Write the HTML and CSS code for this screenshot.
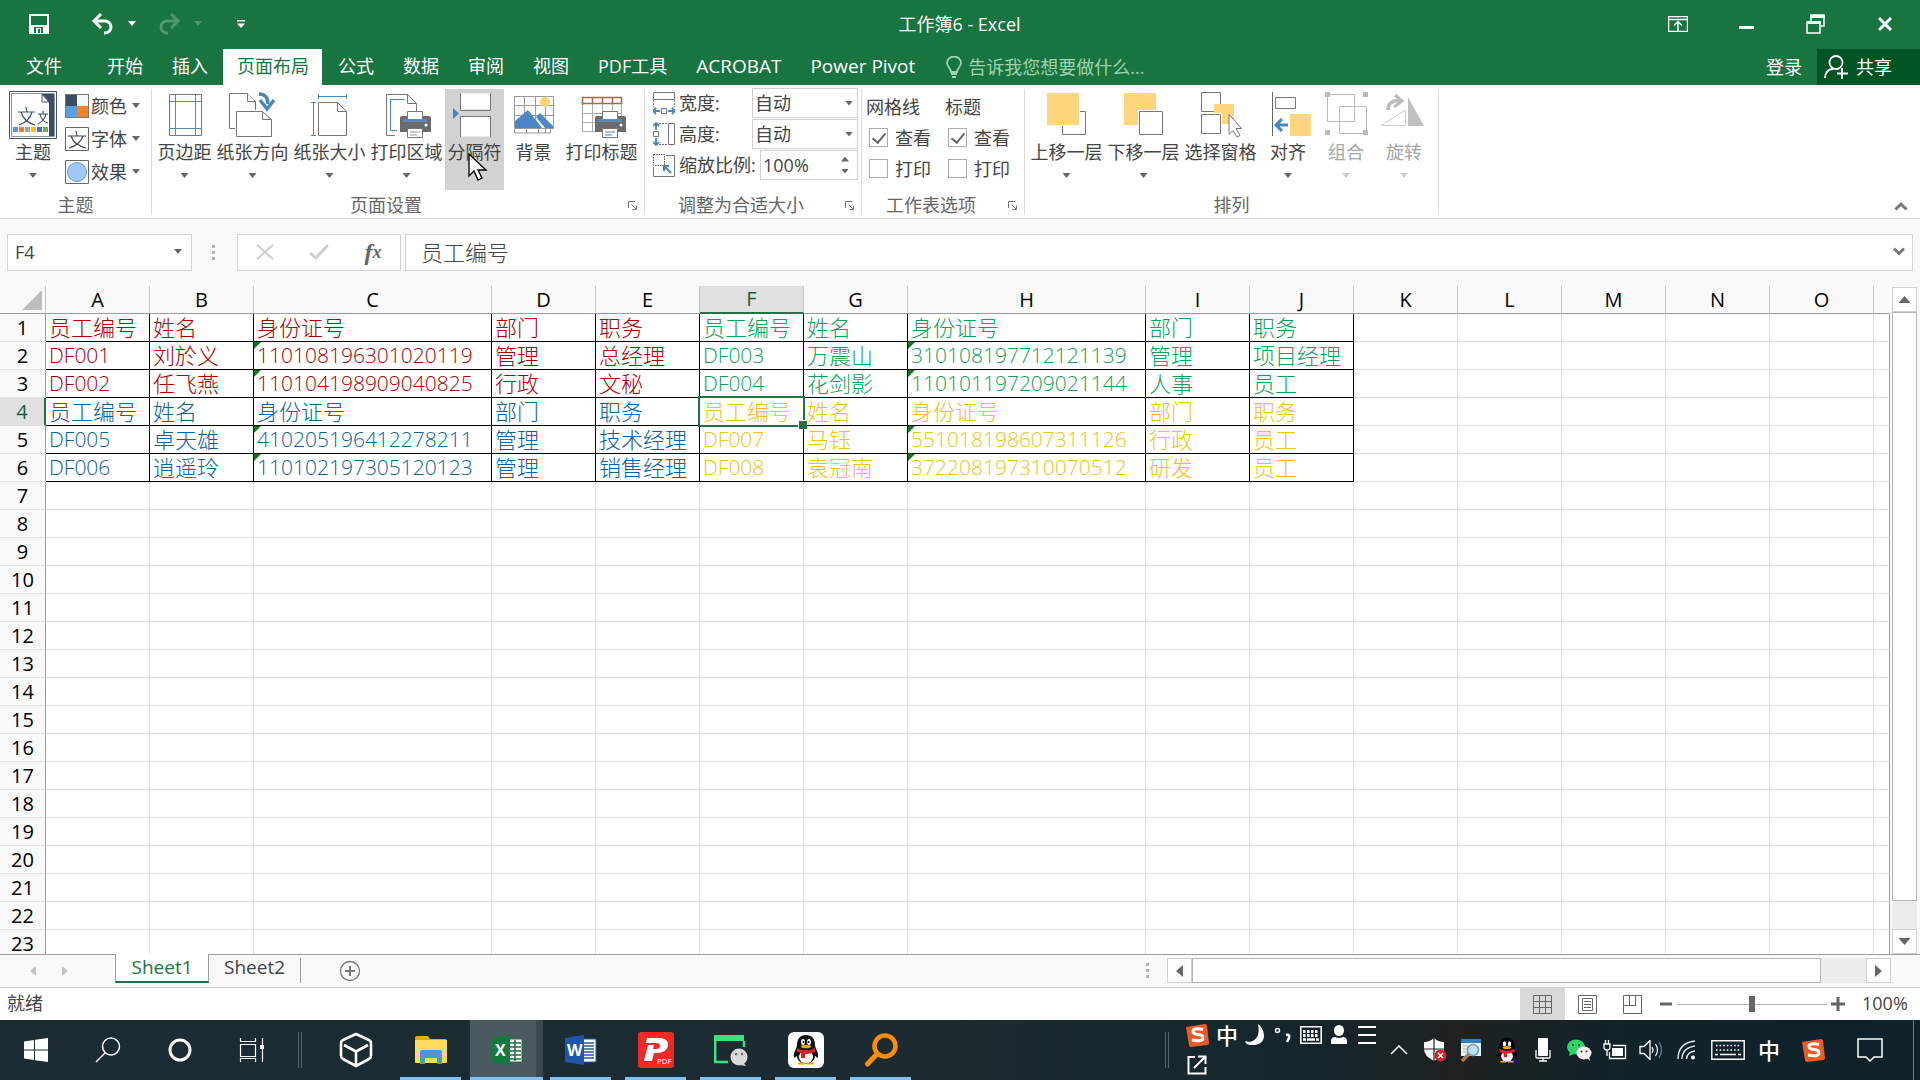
FILE: index.html
```html
<!DOCTYPE html>
<html lang="zh-CN">
  <head>
    <meta charset="UTF-8" />
    <meta name="viewport" content="width=device-width, initial-scale=1.0" />
    <title>工作簿6 - Excel</title>
    <link rel="stylesheet" href="styles.css">
  </head>
  <body>
    <header class="titlebar">
      <div class="quick">
        <button class="qbtn save" aria-label="保存">
          <svg width="20" height="20" viewBox="0 0 20 20"><path d="M1 1h18v18H1z" fill="none" stroke="#fff" stroke-width="2"/><path d="M2 11h16v8H2z" fill="#fff"/><path d="M5 13h9v6H5z" fill="#18753f"/><path d="M7 14h5v5H7z" fill="#fff"/><path d="M9 15h2v4H9z" fill="#18753f"/></svg>
        </button>
        <button class="qbtn undo" aria-label="撤消">
          <svg width="24" height="22" viewBox="0 0 24 22"><path d="M4 8h10a6 6 0 0 1 0 12h-1" fill="none" stroke="#fff" stroke-width="3"/><path d="M10 1L3 8l7 7" fill="none" stroke="#fff" stroke-width="3"/></svg>
          <i class="caret"></i>
        </button>
        <button class="qbtn redo" aria-label="恢复" disabled>
          <svg width="24" height="22" viewBox="0 0 24 22"><path d="M20 8H10a6 6 0 0 0 0 12h1" fill="none" stroke="#fff" stroke-width="3"/><path d="M14 1l7 7-7 7" fill="none" stroke="#fff" stroke-width="3"/></svg>
          <i class="caret"></i>
        </button>
        <button class="qbtn custom" aria-label="自定义快速访问工具栏">
          <svg width="8" height="8" viewBox="0 0 8 8"><path d="M0 0h8v1.500H0zM0 3.500h8L4 8z" fill="#fff"/></svg>
        </button>
      </div>
      <div class="doc-title">工作簿6 - Excel</div>
      <div class="window-buttons">
        <button aria-label="功能区显示选项">
          <svg width="20" height="16" viewBox="0 0 20 16"><path d="M.5.500h19v15H.5zM.5 3.500h19M10 15V6M6 9.500L10 5.500l4 4" fill="none" stroke="#fff" stroke-width="1.500"/></svg>
        </button>
        <button aria-label="最小化">
          <svg width="16" height="16" viewBox="0 0 16 16"><path d="M0 10h15v3H0z" fill="#fff"/></svg>
        </button>
        <button aria-label="还原">
          <svg width="20" height="20" viewBox="0 0 20 20"><path d="M1 8h13v11H1zM5 7V1h13v11h-3" fill="none" stroke="#fff" stroke-width="1.500"/><path d="M1 7h14v3H1zM4 1h15v3H4z" fill="#fff"/></svg>
        </button>
        <button aria-label="关闭">
          <svg width="16" height="16" viewBox="0 0 16 16"><path d="M2 2l12 12M14 2L2 14" stroke="#fff" stroke-width="3"/></svg>
        </button>
      </div>
    </header>

    <nav class="tabs">
      <button class="tab file">文件</button>
      <button class="tab">开始</button>
      <button class="tab">插入</button>
      <button class="tab active">页面布局</button>
      <button class="tab">公式</button>
      <button class="tab">数据</button>
      <button class="tab">审阅</button>
      <button class="tab">视图</button>
      <button class="tab">PDF工具</button>
      <button class="tab latin">ACROBAT</button>
      <button class="tab latin">Power Pivot</button>
      <label class="tell-me">
        <svg width="16" height="22" viewBox="0 0 16 22"><path d="M5 16c0-4-4-5-4-9a7 6.500 0 0 1 14 0c0 4-4 5-4 9z" fill="none" stroke="#9fd3ae" stroke-width="1.800"/><path d="M5 17h6v2H5zM6 20h4v2H6z" fill="#9fd3ae"/></svg>
        <input type="text" placeholder="告诉我您想要做什么..." />
      </label>
      <button class="signin">登录</button>
      <button class="share">
        <svg width="24" height="24" viewBox="0 0 24 24"><g fill="none" stroke="#fff" stroke-width="1.800"><ellipse cx="12" cy="7.500" rx="6.500" ry="6.500"/><path d="M1 23c0-5 3-9 8-9M18 13v11M13 18.500h11"/></g></svg>
        <span>共享</span>
      </button>
    </nav>

    <section class="ribbon">
      <div class="group themes">
        <div class="body">
          <button class="big">
            <svg width="48" height="48" viewBox="0 0 48 48"><path d="M.5.500h47v47H.5z" fill="#fff" stroke="#44546a"/><path d="M2.500 2.500h43v43h-43z" fill="#fff" stroke="#8a96a6"/><path d="M33 3h12v42h-5V11z" fill="#3b4d66"/><path d="M33 3v8h7z" fill="#fff" stroke="#44546a"/><g fill="none" stroke="#3b5170" stroke-width="1.200"><path d="M9 21h17M17 16l1 5M23 21c-2 7-7 11-13 13M12 21c2 7 7 11 14 13"/><path d="M29 23h10M34 20v3M37 23c-1 5-4 8-8 10M31 23c1 5 4 8 8 9"/></g><path d="M4 36h5v5H4z" fill="#5b9bd5"/><path d="M10 36h5v5h-5z" fill="#ed7d31"/><path d="M16 36h5v5h-5z" fill="#a5a5a5"/><path d="M22 36h5v5h-5z" fill="#ffc000"/><path d="M28 36h5v5h-5z" fill="#4472c4"/><path d="M34 36h5v5h-5z" fill="#70ad47"/></svg>
            <span>主题</span><i class="caret"></i>
          </button>
          <div class="small-col">
            <button class="small">
              <svg width="24" height="24" viewBox="0 0 24 24"><path d="M0 0h24v24H0z" fill="#777"/><path d="M1 1h11v11H1z" fill="#3b4d66"/><path d="M12 1h11v11H12z" fill="#f7f7f5"/><path d="M1 12h11v11H1z" fill="#5b9fe0"/><path d="M12 12h11v11H12z" fill="#fb7f28"/></svg>
              <span>颜色</span><i class="caret"></i>
            </button>
            <button class="small">
              <svg width="24" height="24" viewBox="0 0 24 24"><path d="M.5.500h23v23H.5z" fill="#fff" stroke="#666"/><path d="M3 9h18M11 4l1 5M18 9c-2 6-7 10-14 12M6 9c2 6 7 10 15 12" fill="none" stroke="#444" stroke-width="1.200"/></svg>
              <span>字体</span><i class="caret"></i>
            </button>
            <button class="small">
              <svg width="24" height="24" viewBox="0 0 24 24"><path d="M.5.500h23v23H.5z" fill="#fff" stroke="#666"/><circle cx="12" cy="12" r="9.500" fill="#9fc8f5" stroke="#5d9ae0"/></svg>
              <span>效果</span><i class="caret"></i>
            </button>
          </div>
        </div>
        <div class="caption"><span>主题</span></div>
      </div>

      <div class="group setup">
        <div class="body">
          <button class="big three">
            <svg width="48" height="48" viewBox="0 0 48 48"><path d="M8.500 3.500h32v41h-32z" fill="#fff" stroke="#777"/><path d="M14.500 4v40M34.500 4v40M9 10.500h31M9 37.500h31" stroke="#5b8ab5"/></svg>
            <span>页边距</span><i class="caret"></i>
          </button>
          <button class="big four">
            <svg width="48" height="48" viewBox="0 0 48 48"><g fill="#fff" stroke="#777"><path d="M6 37.500H.5v-35h18l8 8V19"/><path d="M18.500 2.500v8h8M7.500 20.500h26l9 8v17h-35zM33.500 20.500v8h9"/></g><path d="M30 3c6 0 9 4 9 10" fill="none" stroke="#4a86bd" stroke-width="3.500"/><path d="M31 9l7 9 7-9" fill="none" stroke="#4a86bd" stroke-width="3.500"/></svg>
            <span>纸张方向</span><i class="caret"></i>
          </button>
          <button class="big four">
            <svg width="48" height="48" viewBox="0 0 48 48"><path d="M12.500 11.500h19l9 9v24h-28zM31.500 11.500v9h9" fill="#fff" stroke="#777"/><path d="M12 5.500h29M12.500 3v5M40.500 3v5M7.500 11v33M5 11.500h5M5 44.500h5" stroke="#4a86bd"/></svg>
            <span>纸张大小</span><i class="caret"></i>
          </button>
          <button class="big four">
            <svg width="48" height="48" viewBox="0 0 48 48"><path d="M12 44.500H3.500v-41h21l9 9v10M24.500 3.500v9h9" fill="#fff" stroke="#777"/><path d="M22 8.500H7.500v31H14" fill="none" stroke="#4a86bd"/><path d="M17 27q0-2 2-2h27q2 0 2 2v14H17z" fill="#6b6b6b"/><path d="M24.500 20.500h15v9h-15z" fill="#fff" stroke="#777"/><path d="M20 28h24v3H20z" fill="#5b8ab5"/><circle cx="43" cy="34" r="1.500" fill="#fff"/><path d="M24.500 37.500h15v9h-15z" fill="#fff" stroke="#777"/><path d="M27 41h10M27 44h7" stroke="#999"/></svg>
            <span>打印区域</span><i class="caret"></i>
          </button>
          <button class="big three hover">
            <svg width="48" height="48" viewBox="0 0 48 48"><path d="M9.500 2.500h30v16h-30zM9.500 25.500h30v20h-30z" fill="#fff"/><path d="M9.500 2v17.500h30V2M9.500 46V25.500h30V46" fill="none" stroke="#777"/><path d="M2 17l6 5.500L2 28z" fill="#4a86bd"/></svg>
            <span>分隔符</span>
            <svg class="pointer" width="20" height="29" viewBox="0 0 20 29"><path d="M1 1v22l5-5 4 9 4-2-4-8h8z" fill="#fff" stroke="#000" stroke-width="1.300"/></svg>
          </button>
          <button class="big three">
            <svg width="48" height="48" viewBox="0 0 48 48"><path d="M4.500 5.500h39v32h-39zM4.500 38v4h36v-4M4 14.500h40M4 24.500h40M14.500 5v32M25.500 5v32M35.500 5v37M16.500 38v4M28.500 38v4" fill="none" stroke="#999"/><path d="M5 37v-7l13-11 14 18zM26 26l4-4 13 13v2h-8z" fill="#4a86c8"/><circle cx="35" cy="11" r="5" fill="#fbd46e"/></svg>
            <span>背景</span>
          </button>
          <button class="big four">
            <svg width="48" height="48" viewBox="0 0 48 48"><path d="M4.500 6.500h39v34h-39zM4 22.500h39M4 31.500h39M14.500 6v35M24.500 6v35M34.500 6v35" fill="none" stroke="#aaa"/><path d="M4.500 6.500h39v6h-39zM14.500 6v6M24.500 6v6M34.500 6v6M4.500 6v8" fill="none" stroke="#b5604a" stroke-width="1.500"/><path d="M17 27q0-2 2-2h27q2 0 2 2v14H17z" fill="#6b6b6b"/><path d="M24.500 20.500h15v9h-15z" fill="#fff" stroke="#777"/><path d="M20 28h24v3H20z" fill="#5b8ab5"/><circle cx="43" cy="34" r="1.500" fill="#fff"/><path d="M24.500 37.500h15v9h-15z" fill="#fff" stroke="#777"/><path d="M27 41h10M27 44h7" stroke="#4a86bd"/></svg>
            <span>打印标题</span>
          </button>
        </div>
        <div class="caption">
          <span>页面设置</span>
          <button class="launcher" aria-label="页面设置"><svg width="9" height="9" viewBox="0 0 9 9"><path d="M.5 7V.500H7M3.500 3.500L8 8M8.500 4.500v4h-4" fill="none" stroke="#777"/></svg></button>
        </div>
      </div>

      <div class="group fit">
        <div class="body rows">
          <div class="row">
            <svg width="22" height="24" viewBox="0 0 22 24"><path d="M.5 1.500h21v7H.5z" fill="#fff" stroke="#777"/><path d="M.5 9v7M21.500 9v7" stroke="#777" stroke-dasharray="2 1"/><path d="M8.500 17.500h5v5h-5z" fill="#fff" stroke="#777"/><path d="M0 20h7M15 20h7M3 17l-3 3 3 3M19 17l3 3-3 3" fill="none" stroke="#4a86bd" stroke-width="1.800"/></svg>
            <label for="fit-width">宽度:</label>
            <div class="dropdown">
              <select id="fit-width"><option>自动</option></select><i class="caret"></i>
            </div>
          </div>
          <div class="row">
            <svg width="22" height="24" viewBox="0 0 22 24"><path d="M15.500 1.500h6v21h-6z" fill="#fff" stroke="#777"/><path d="M6 1.500h9M6 22.500h9" stroke="#777" stroke-dasharray="2 1"/><path d="M.5 9.500h5v5h-5z" fill="#fff" stroke="#777"/><path d="M3 1v7M3 16v7M0 4l3-3 3 3M0 20l3 3 3-3" fill="none" stroke="#4a86bd" stroke-width="1.800"/></svg>
            <label for="fit-height">高度:</label>
            <div class="dropdown">
              <select id="fit-height"><option>自动</option></select><i class="caret"></i>
            </div>
          </div>
          <div class="row">
            <svg width="22" height="24" viewBox="0 0 22 24"><path d="M.5 14v9.500h21V2.500H13" fill="#fff" stroke="#777"/><path d="M.5 1.500h11v11H.5z" fill="#fff" stroke="#555" stroke-dasharray="1.500 1"/><path d="M18 20l-7-7M11 18v-5h5" fill="none" stroke="#4a86bd" stroke-width="2.200"/></svg>
            <label for="fit-scale">缩放比例:</label>
            <div class="dropdown spin">
              <input id="fit-scale" type="text" value="100%" /><i class="caret up"></i><i class="caret"></i>
            </div>
          </div>
        </div>
        <div class="caption">
          <span>调整为合适大小</span>
          <button class="launcher" aria-label="调整为合适大小"><svg width="9" height="9" viewBox="0 0 9 9"><path d="M.5 7V.500H7M3.500 3.500L8 8M8.500 4.500v4h-4" fill="none" stroke="#777"/></svg></button>
        </div>
      </div>

      <div class="group options">
        <div class="body">
          <fieldset>
            <legend>网格线</legend>
            <label><input type="checkbox" checked />查看</label>
            <label><input type="checkbox" />打印</label>
          </fieldset>
          <fieldset>
            <legend>标题</legend>
            <label><input type="checkbox" checked />查看</label>
            <label><input type="checkbox" />打印</label>
          </fieldset>
        </div>
        <div class="caption">
          <span>工作表选项</span>
          <button class="launcher" aria-label="工作表选项"><svg width="9" height="9" viewBox="0 0 9 9"><path d="M.5 7V.500H7M3.500 3.500L8 8M8.500 4.500v4h-4" fill="none" stroke="#777"/></svg></button>
        </div>
      </div>

      <div class="group arrange">
        <div class="body">
          <button class="big four">
            <svg width="48" height="48" viewBox="0 0 48 48"><path d="M19.500 20.500h23v23h-23z" fill="#fff" stroke="#777"/><path d="M3 1h34v34H3z" fill="#fff"/><path d="M4 2h32v32H4z" fill="#ffd57e"/></svg>
            <span>上移一层</span><i class="caret"></i>
          </button>
          <button class="big four">
            <svg width="48" height="48" viewBox="0 0 48 48"><path d="M4 2h32v32H4z" fill="#ffd57e"/><path d="M18 19h26v26H18z" fill="#fff"/><path d="M19.500 20.500h23v23h-23z" fill="#fff" stroke="#777"/></svg>
            <span>下移一层</span><i class="caret"></i>
          </button>
          <button class="big four">
            <svg width="48" height="48" viewBox="0 0 48 48"><path d="M4.500 1.500h19v19h-19zM4.500 23.500h19v19h-19z" fill="#fff" stroke="#777"/><path d="M17 13h20v20H25V22h-8z" fill="#ffd57e"/><path d="M32 23.500v20l4-4 4 6.500 3-1.500-4-7h5.500z" fill="#fff" stroke="#777"/></svg>
            <span>选择窗格</span>
          </button>
          <button class="big two">
            <svg width="48" height="48" viewBox="0 0 48 48"><path d="M8.500 1v44" stroke="#666"/><path d="M11.500 6.500h20v11h-20z" fill="#fff" stroke="#777"/><path d="M26 23h21v22H26z" fill="#ffd57e"/><path d="M12 34h12M18 28l-6 6 6 6" fill="none" stroke="#4a86bd" stroke-width="3"/></svg>
            <span>对齐</span><i class="caret"></i>
          </button>
          <button class="big two" disabled>
            <svg width="48" height="48" viewBox="0 0 48 48"><path d="M5.500 3.500h27v27h-27zM17.500 15.500h27v27h-27z" fill="none" stroke="#bbb"/><path d="M3 1h5v5H3zM41 1h5v5h-5zM3 39h5v5H3zM41 39h5v5h-5z" fill="#bbb"/></svg>
            <span>组合</span><i class="caret"></i>
          </button>
          <button class="big two" disabled>
            <svg width="48" height="48" viewBox="0 0 48 48"><path d="M28 6v29h16z" fill="#c0c0c0"/><path d="M1 34.500h24.500V19z" fill="#fff" stroke="#ccc"/><path d="M8 19c0-7 5-10 12-9" fill="none" stroke="#bbb" stroke-width="3.500"/><path d="M15 4l7 6-8 6" fill="none" stroke="#bbb" stroke-width="3"/></svg>
            <span>旋转</span><i class="caret"></i>
          </button>
        </div>
        <div class="caption"><span>排列</span></div>
      </div>
      <button class="collapse" aria-label="折叠功能区">
        <svg width="14" height="10" viewBox="0 0 14 10"><path d="M1.500 8.500L7 3l5.500 5.500" fill="none" stroke="#777" stroke-width="3"/></svg>
      </button>
    </section>

    <section class="formula-bar">
      <div class="name-box">
        <input type="text" value="F4" aria-label="名称框" /><i class="caret"></i>
      </div>
      <i class="dots"></i>
      <div class="fx">
        <button aria-label="取消"><svg width="18" height="16" viewBox="0 0 18 16"><path d="M1 1l16 14M17 1L1 15" stroke="#cfcfcf" stroke-width="2"/></svg></button>
        <button aria-label="输入"><svg width="20" height="16" viewBox="0 0 20 16"><path d="M1 9l6 5L19 1" fill="none" stroke="#cfcfcf" stroke-width="3"/></svg></button>
        <button class="fx-label" aria-label="插入函数"><b>f</b><b class="x">x</b></button>
      </div>
      <div class="formula">
        <input type="text" value="员工编号" aria-label="编辑栏" />
        <svg width="12" height="9" viewBox="0 0 12 9"><path d="M1 1.500L6 6.500l5-5" fill="none" stroke="#777" stroke-width="3"/></svg>
      </div>
    </section>

    <main class="workspace">
      <div class="sheet">
        <table>
          <colgroup>
            <col class="rh" /><col /><col /><col class="wide" /><col /><col /><col /><col /><col class="wide" /><col /><col /><col /><col /><col /><col /><col /><col class="rest" />
          </colgroup>
          <thead>
            <tr>
              <th class="corner"><svg width="20" height="20" viewBox="0 0 20 20"><path d="M20 0v20H0z" fill="#bdbdbd"/></svg></th>
              <th>A</th><th>B</th><th>C</th><th>D</th><th>E</th><th class="current">F</th><th>G</th><th>H</th><th>I</th><th>J</th><th>K</th><th>L</th><th>M</th><th>N</th><th>O</th><th></th>
            </tr>
          </thead>
          <tbody id="rows">
            <tr>
              <th>1</th>
              <td class="red">员工编号</td><td class="red">姓名</td><td class="red">身份证号</td><td class="red">部门</td><td class="red">职务</td>
              <td class="green">员工编号</td><td class="green">姓名</td><td class="green">身份证号</td><td class="green">部门</td><td class="green">职务</td>
              <td></td><td></td><td></td><td></td><td></td><td></td>
            </tr>
            <tr>
              <th>2</th>
              <td class="red num">DF001</td><td class="red">刘於义</td><td class="red num text">110108196301020119</td><td class="red">管理</td><td class="red">总经理</td>
              <td class="green num">DF003</td><td class="green">万震山</td><td class="green num text">310108197712121139</td><td class="green">管理</td><td class="green">项目经理</td>
              <td></td><td></td><td></td><td></td><td></td><td></td>
            </tr>
            <tr>
              <th>3</th>
              <td class="red num">DF002</td><td class="red">任飞燕</td><td class="red num text">110104198909040825</td><td class="red">行政</td><td class="red">文秘</td>
              <td class="green num">DF004</td><td class="green">花剑影</td><td class="green num text">110101197209021144</td><td class="green">人事</td><td class="green">员工</td>
              <td></td><td></td><td></td><td></td><td></td><td></td>
            </tr>
            <tr>
              <th class="current">4</th>
              <td class="blue">员工编号</td><td class="blue">姓名</td><td class="blue">身份证号</td><td class="blue">部门</td><td class="blue">职务</td>
              <td class="yellow selected">员工编号</td><td class="yellow">姓名</td><td class="yellow">身份证号</td><td class="yellow">部门</td><td class="yellow">职务</td>
              <td></td><td></td><td></td><td></td><td></td><td></td>
            </tr>
            <tr>
              <th>5</th>
              <td class="blue num">DF005</td><td class="blue">卓天雄</td><td class="blue num text">410205196412278211</td><td class="blue">管理</td><td class="blue">技术经理</td>
              <td class="yellow num">DF007</td><td class="yellow">马钰</td><td class="yellow num text">551018198607311126</td><td class="yellow">行政</td><td class="yellow">员工</td>
              <td></td><td></td><td></td><td></td><td></td><td></td>
            </tr>
            <tr>
              <th>6</th>
              <td class="blue num">DF006</td><td class="blue">逍遥玲</td><td class="blue num text">110102197305120123</td><td class="blue">管理</td><td class="blue">销售经理</td>
              <td class="yellow num">DF008</td><td class="yellow">袁冠南</td><td class="yellow num text">372208197310070512</td><td class="yellow">研发</td><td class="yellow">员工</td>
              <td></td><td></td><td></td><td></td><td></td><td></td>
            </tr>
          </tbody>
        </table>
      </div>
      <div class="vscroll">
        <button aria-label="向上滚动"><i class="caret up"></i></button>
        <div class="thumb"></div>
        <div class="track"></div>
        <button aria-label="向下滚动"><i class="caret"></i></button>
      </div>
    </main>

    <section class="sheet-bar">
      <div class="sheet-nav">
        <button aria-label="上一个工作表"><svg width="6" height="10" viewBox="0 0 6 10"><path d="M6 0v10L0 5z" fill="#c4c4c4"/></svg></button>
        <button aria-label="下一个工作表"><svg width="6" height="10" viewBox="0 0 6 10"><path d="M0 0v10l6-5z" fill="#c4c4c4"/></svg></button>
      </div>
      <button class="sheet-tab active">Sheet1</button>
      <button class="sheet-tab">Sheet2</button>
      <button class="add-sheet" aria-label="新工作表">
        <svg width="22" height="22" viewBox="0 0 22 22"><circle cx="11" cy="11" r="9.500" fill="none" stroke="#777" stroke-width="1.300"/><path d="M6 11h10M11 6v10" stroke="#777" stroke-width="2"/></svg>
      </button>
      <i class="dots"></i>
      <div class="hscroll">
        <button aria-label="向左滚动"><svg width="7" height="12" viewBox="0 0 7 12"><path d="M7 0v12L0 6z" fill="#666"/></svg></button>
        <div class="thumb"></div>
        <div class="track"></div>
        <button aria-label="向右滚动"><svg width="7" height="12" viewBox="0 0 7 12"><path d="M0 0v12l7-6z" fill="#666"/></svg></button>
      </div>
    </section>

    <footer class="status">
      <span>就绪</span>
      <div class="views">
        <button class="on" aria-label="普通"><svg width="19" height="19" viewBox="0 0 19 19"><path d="M.5.500h18v18H.5zM6.500 0v19M12.500 0v19M0 6.500h19M0 12.500h19" fill="none" stroke="#666"/></svg></button>
        <button aria-label="页面布局"><svg width="19" height="19" viewBox="0 0 19 19"><path d="M.5.500h18v18H.5zM4.500 3.500h10v12h-10zM6 6.500h7M6 9.500h7M6 12.500h7" fill="none" stroke="#666"/></svg></button>
        <button aria-label="分页预览"><svg width="19" height="19" viewBox="0 0 19 19"><path d="M.5.500h18v18H.5zM6.500 0v10.500M12.500 0v10.500M0 10.500h13" fill="none" stroke="#666"/></svg></button>
      </div>
      <div class="zoom">
        <button aria-label="缩小"><svg width="14" height="14" viewBox="0 0 14 14"><path d="M1 7h12" stroke="#666" stroke-width="3"/></svg></button>
        <input type="range" min="0" max="100" value="50" aria-label="显示比例" />
        <button aria-label="放大"><svg width="14" height="14" viewBox="0 0 14 14"><path d="M0 7h14M7 0v14" stroke="#666" stroke-width="3"/></svg></button>
        <span>100%</span>
      </div>
    </footer>

    <div class="taskbar">
      <button class="sys" aria-label="开始"><svg width="24" height="24" viewBox="0 0 24 24"><path d="M0 3.500L10 2v9.500H0zM11 1.800L24 0v11.500H11zM0 12.500h10V22L0 20.500zM11 12.500h13V24l-13-1.800z" fill="#fff"/></svg></button>
      <button class="sys" aria-label="搜索"><svg width="26" height="26" viewBox="0 0 26 26"><circle cx="16" cy="9.500" r="8.500" fill="none" stroke="#fff" stroke-width="1.500"/><path d="M10.500 15.500L1 25" stroke="#fff" stroke-width="1.500"/></svg></button>
      <button class="sys" aria-label="Cortana"><svg width="24" height="24" viewBox="0 0 24 24"><circle cx="12" cy="12" r="10" fill="none" stroke="#fff" stroke-width="3"/></svg></button>
      <button class="sys" aria-label="任务视图"><svg width="26" height="26" viewBox="0 0 26 26"><path d="M1.500 7.500h15v12h-15zM1.500 1v3.500h15V1M1.500 25v-3.500h15V25M23.500 1v24" fill="none" stroke="#fff" stroke-width="1.200"/><path d="M21 8h4v4h-4z" fill="#fff"/></svg></button>
      <i class="sep"></i>
      <button class="app" aria-label="3D"><svg width="34" height="36" viewBox="0 0 34 36"><path d="M17 2l13 6q2 1 2 3v13q0 2-2 3l-13 7-13-7q-2-1-2-3V11q0-2 2-3zM5 13l12 6.500M17 34V19.500l12-6.500" fill="none" stroke="#fff" stroke-width="2.600" stroke-linejoin="round"/></svg></button>
      <button class="app open" aria-label="文件资源管理器"><svg width="32" height="28" viewBox="0 0 32 28"><path d="M0 1.500Q0 0 2 0h11l2 3h16v24H1z" fill="#e8a80e"/><path d="M0 4h32v22q0 1-1 1H1q-1 0-1-1z" fill="#fddc5c"/><path d="M5 28V16q0-2 2-2h18q2 0 2 2v12h-5v-6H10v6z" fill="#3f9bdc"/></svg></button>
      <button class="app open current" aria-label="Excel"><svg width="32" height="30" viewBox="0 0 32 30"><path d="M17 4h14v23H17z" fill="#fff" stroke="#1e7145"/><path d="M18 8h12M18 12h12M18 16h12M18 20h12M18 24h12M24 5v21" stroke="#1e7145" stroke-width="1.500"/><path d="M0 3l19-3v30L0 27z" fill="#117a3c"/><text x="4" y="21" class="logo-letter">X</text></svg></button>
      <button class="app open" aria-label="Word"><svg width="32" height="30" viewBox="0 0 32 30"><path d="M17 4h14v23H17z" fill="#fff" stroke="#2b579a"/><path d="M19 8h10M19 11h10M19 14h10M19 17h10M19 20h10M19 23h10" stroke="#2b579a" stroke-width="1.300"/><path d="M0 3l19-3v30L0 27z" fill="#1e56a8"/><text x="2" y="21" class="logo-letter">W</text></svg></button>
      <button class="app open" aria-label="PDF"><svg width="36" height="36" viewBox="0 0 36 36"><rect width="36" height="36" rx="3" fill="#ee2a24"/><path d="M9 6h14q8 1 7 8-2 7-11 7h-3l-2 8H6l4-16h6l-1 4h3q4 0 4-3t-4-3H8z" fill="#fff"/><text x="19" y="32" class="logo-small">PDF</text></svg></button>
      <button class="app open" aria-label="企业通讯"><svg width="36" height="32" viewBox="0 0 36 32"><path d="M1 1h30v6H1z" fill="#3ee07e"/><path d="M31 7v6M2.200 6v22H15" fill="none" stroke="#3ee07e" stroke-width="2.500"/><circle cx="26" cy="23" r="8.500" fill="#d9d9d9"/><path d="M30 28l3 4-6-1z" fill="#d9d9d9"/><circle cx="23" cy="20" r="1.200" fill="#666"/><circle cx="29" cy="20" r="1.200" fill="#666"/></svg></button>
      <button class="app open" aria-label="QQ"><svg width="36" height="36" viewBox="0 0 36 36"><rect width="36" height="36" rx="6" fill="#fff"/><path d="M18 3c-6 0-9 4-9 10 0 3-4 8-3 12 1 2 2-1 3-1 0 4 4 8 9 8s9-4 9-8c1 0 2 3 3 1 1-4-3-9-3-12 0-6-3-10-9-10z" fill="#111"/><ellipse cx="18" cy="25" rx="7" ry="6.500" fill="#fff"/><ellipse cx="15" cy="10" rx="2" ry="3" fill="#fff"/><ellipse cx="21" cy="10" rx="2" ry="3" fill="#fff"/><circle cx="15.500" cy="10" r="1"/><circle cx="20.500" cy="10" r="1"/><ellipse cx="18" cy="14.500" rx="5" ry="1.800" fill="#f6a500"/><path d="M9 16q9 5 18 0v4q-5 2-9 2l-1 0v4h-4v-5l-4-1z" fill="#e02020"/><path d="M10 31.500h7M19 31.500h7" stroke="#f6a500" stroke-width="2"/></svg></button>
      <button class="app open" aria-label="查找"><svg width="34" height="34" viewBox="0 0 34 34"><circle cx="21" cy="13" r="10.500" fill="none" stroke="#ff8c0a" stroke-width="4.500"/><path d="M13 21L3.500 31" stroke="#ff8c0a" stroke-width="5" stroke-linecap="round"/></svg></button>

      <div class="tray">
        <i class="sep"></i>
        <div class="ime">
          <span class="first"><svg width="24" height="24" viewBox="0 0 24 24"><path d="M1 4l19-3q2 0 2 2l2 17q0 2-2 2L6 24q-2 0-2-2z" fill="#ee5a24"/><path d="M18 6.500q-10-2-10 2 0 2.500 5 3 5 .5 5 3.500 0 4-11 2" fill="none" stroke="#fff" stroke-width="3"/></svg></span>
          <span>中</span>
          <span><svg width="22" height="22" viewBox="0 0 22 22"><path d="M14 0c8 6 10 22-7 21-3 0-5-1-6-4 8 3 16-3 13-17z" fill="#fff"/></svg></span>
          <span><svg width="18" height="16" viewBox="0 0 18 16"><circle cx="3.500" cy="3.500" r="2" fill="none" stroke="#fff" stroke-width="1.500"/><path d="M12 8q4-1 3 3l-2 4" fill="none" stroke="#fff" stroke-width="2.500"/></svg></span>
          <span><svg width="22" height="18" viewBox="0 0 22 18"><path d="M.8.800h20.400v16.400H.8z" fill="none" stroke="#fff" stroke-width="1.600"/><path d="M3 5.500h16M3 9.500h16" stroke="#fff" stroke-width="3" stroke-dasharray="2.500 1.500"/><path d="M3 13.500h3M7 13.500h8M16 13.500h3" stroke="#fff" stroke-width="2.500"/></svg></span>
          <span><svg width="16" height="20" viewBox="0 0 16 20"><ellipse cx="8" cy="5.500" rx="5" ry="5.500" fill="#fff"/><path d="M0 19v-4q1-3 4-3 4 2 8 0 3 0 4 3v4z" fill="#fff"/></svg></span>
          <span><svg width="20" height="18" viewBox="0 0 20 18"><path d="M1 1h18M1 9h18M1 17h18" stroke="#fff" stroke-width="2"/></svg></span>
          <span class="first"><svg width="20" height="20" viewBox="0 0 20 20"><path d="M8 2H1.500v16.500h17V12M7 13L18 2M11 1.500h7.500V9" fill="none" stroke="#fff" stroke-width="2"/></svg></span>
        </div>
        <span class="t"><svg width="18" height="10" viewBox="0 0 18 10"><path d="M1 9l8-8 8 8" fill="none" stroke="#fff" stroke-width="1.500"/></svg></span>
        <span class="t"><svg width="24" height="24" viewBox="0 0 24 24"><path d="M1 4q6 0 10-4 4 4 10 4v7q0 7-10 12Q1 18 1 11z" fill="#fff"/><path d="M11 0v23M1 11h20" stroke="#222" stroke-width="1.200"/><circle cx="17.500" cy="17.500" r="6" fill="#d9222a"/><path d="M15 15l5 5M20 15l-5 5" stroke="#fff" stroke-width="1.500"/></svg></span>
        <span class="t"><svg width="22" height="24" viewBox="0 0 22 24"><path d="M1 1h20v17H1z" fill="#e8f2fa"/><path d="M1 1h20v4H1z" fill="#2f7fc1"/><path d="M3 8h10M3 11h8M3 14h6" stroke="#c9b46a"/><path d="M9 16l-7 7" stroke="#b37a4c" stroke-width="3.500"/><circle cx="13" cy="12" r="5.500" fill="#bfe0f2" stroke="#6aa0c4" stroke-width="1.500"/></svg></span>
        <span class="t"><svg width="22" height="26" viewBox="5 2 26 31"><path d="M18 3c-6 0-9 4-9 10 0 3-4 8-3 12 1 2 2-1 3-1 0 4 4 8 9 8s9-4 9-8c1 0 2 3 3 1 1-4-3-9-3-12 0-6-3-10-9-10z" fill="#050505"/><ellipse cx="18" cy="25" rx="7" ry="6.500" fill="#fff"/><ellipse cx="15" cy="10" rx="2" ry="3" fill="#fff"/><ellipse cx="21" cy="10" rx="2" ry="3" fill="#fff"/><ellipse cx="18" cy="14.500" rx="5" ry="1.800" fill="#f6a500"/><path d="M9 16q9 5 18 0v4q-5 2-9 2v4h-4v-4l-5-2z" fill="#e0202f"/><path d="M10 31.500h7M19 31.500h7" stroke="#f6a500" stroke-width="2"/></svg></span>
        <span class="t"><svg width="16" height="24" viewBox="0 0 16 24"><rect x="3" width="10" height="18" rx="1" fill="#fff"/><path d="M1 12v7q0 1 1 1h12q1 0 1-1v-7M8 20v3M4 23h8" fill="none" stroke="#fff" stroke-width="1.300"/></svg></span>
        <span class="t"><svg width="26" height="22" viewBox="0 0 26 22"><ellipse cx="10" cy="8" rx="9" ry="7.500" fill="#2bd568"/><path d="M4 13l-1 4 5-2z" fill="#2bd568"/><ellipse cx="18" cy="14" rx="7.500" ry="6.500" fill="#f4f4f4"/><path d="M21 19l3 3-1-5z" fill="#f4f4f4"/><g fill="#333"><circle cx="7" cy="6" r="1"/><circle cx="13" cy="6" r="1"/><circle cx="15.500" cy="12.500" r="1"/><circle cx="20.500" cy="12.500" r="1"/></g></svg></span>
        <span class="t"><svg width="24" height="20" viewBox="0 0 24 20"><path d="M9 8h11v8H9z" fill="#fff"/><path d="M10 5.500h12.500v13h-16V12M1 4v3q0 3 3 3t3-3V4zM2.500 4V0M5.500 4V0M4 10v6" fill="none" stroke="#fff" stroke-width="1.300"/></svg></span>
        <span class="t"><svg width="24" height="20" viewBox="0 0 24 20"><path d="M1 6.500h4l6-6v19l-6-6H1z" fill="none" stroke="#fff" stroke-width="1.300"/><path d="M13 7q2 3 0 6M16.500 4q4 6 0 12" fill="none" stroke="#fff" stroke-width="1.200"/><path d="M20 2q5 8 0 16" fill="none" stroke="#718087" stroke-width="1.200"/></svg></span>
        <span class="t"><svg width="20" height="20" viewBox="0 0 20 20"><path d="M1 19Q1 3 18 1M5 19Q5 8 18 6M9.500 19Q10 12 18 11" fill="none" stroke="#dfe5e8" stroke-width="1.400"/><circle cx="16" cy="17.500" r="2" fill="#fff"/></svg></span>
        <span class="t kb"><svg width="34" height="20" viewBox="0 0 34 20"><path d="M.8.800h32.400v18.400H.8z" fill="none" stroke="#fff" stroke-width="1.400"/><path d="M5 5.500h25M5 10h25" stroke="#fff" stroke-width="1.600" stroke-dasharray="1.600 2"/><path d="M4 14.500h3M9 14.500h16M27 14.500h3" stroke="#fff" stroke-width="1.600"/></svg></span>
        <span class="t zh">中</span>
        <span class="t sg"><svg width="24" height="24" viewBox="0 0 24 24"><path d="M1 4l19-3q2 0 2 2l2 17q0 2-2 2L6 24q-2 0-2-2z" fill="#ee5a24"/><path d="M18 6.500q-10-2-10 2 0 2.500 5 3 5 .5 5 3.500 0 4-11 2" fill="none" stroke="#fff" stroke-width="3"/></svg></span>
        <span class="t note"><svg width="26" height="24" viewBox="0 0 26 24"><path d="M1 1h24v18h-8l-4 4-4-4H1z" fill="none" stroke="#fff" stroke-width="1.500"/></svg></span>
      </div>
    </div>
    <script src="grid.js"></script>
  </body>
</html>
```
FILE: styles.css
```css
* {
  box-sizing: border-box;
}
body {
  margin: 0;
  height: 100vh;
  display: flex;
  flex-direction: column;
  overflow: hidden;
  font-family: "Open Sans", "Noto Sans CJK SC", sans-serif;
  font-size: 18px;
  line-height: 24px;
  color: #444;
  background: #fff;
}
button,
input,
select {
  font: inherit;
  color: inherit;
  background: none;
  border: 0;
  padding: 0;
  margin: 0;
  outline: 0;
  border-radius: 0;
}
svg {
  display: block;
  flex: none;
}

.caret {
  flex: none;
  width: 8px;
  height: 5px;
  background: #666;
  clip-path: polygon(0 0, 100% 0, 50% 100%);
}
.caret.up {
  clip-path: polygon(50% 0, 100% 100%, 0 100%);
}
.dots {
  flex: none;
  width: 3px;
  height: 16px;
  background: repeating-linear-gradient(#b5b5b5 0 3px, transparent 3px 6px);
}

/* title bar */
.titlebar {
  height: 49px;
  flex: none;
  display: flex;
  align-items: center;
  justify-content: space-between;
  padding-bottom: 2px;
  background: #18753f;
  color: #fff;
}
.quick,
.window-buttons {
  flex: 1;
  display: flex;
  align-items: center;
}
.qbtn {
  display: flex;
  align-items: center;
}
.qbtn .caret {
  background: #fff;
  margin-left: 13px;
}
.save {
  margin-left: 29px;
}
.undo {
  margin-left: 42px;
}
.redo {
  margin-left: 21px;
  opacity: 0.25;
}
.custom {
  margin-left: 35px;
}
.window-buttons {
  justify-content: flex-end;
  padding-right: 1px;
}
.window-buttons button {
  width: 69px;
  display: flex;
  justify-content: center;
}

/* ribbon tabs */
.tabs {
  height: 36px;
  flex: none;
  display: flex;
  background: #18753f;
  color: #fff;
}
.tab {
  padding: 0 13px 3px 14px;
  margin-right: 2px;
}
.tab.file {
  padding: 0 31px 3px 26px;
  margin-right: 0;
}
.tab.latin {
  font-size: 19px;
}
.tab.active {
  background: #fff;
  color: #18753f;
}
.tell-me {
  display: flex;
  align-items: center;
  gap: 6px;
  margin-left: 16px;
}
.tell-me input {
  width: 220px;
}
.tell-me input::placeholder {
  color: #9fd3ae;
  opacity: 1;
}
.signin {
  margin-left: auto;
  padding: 0 15px;
}
.share {
  width: 103px;
  display: flex;
  align-items: center;
  gap: 8px;
  padding-left: 7px;
  background: #005522;
}

/* ribbon */
.ribbon {
  height: 134px;
  flex: none;
  display: flex;
  align-items: center;
  border-bottom: 1px solid #e0e0e0;
}
.group {
  height: 125px;
  display: flex;
  flex-direction: column;
  border-right: 1px solid #dcdcdc;
}
.body {
  height: 101px;
  display: flex;
}
.caption {
  height: 24px;
  display: flex;
  align-items: center;
  padding-top: 6px;
  color: #666;
}
.caption span {
  flex: 1;
  text-align: center;
}
.launcher {
  width: 24px;
  padding-left: 8px;
}
.big {
  position: relative;
  width: 58px;
  display: flex;
  flex-direction: column;
  align-items: center;
  padding-top: 2px;
  white-space: nowrap;
}
.big span {
  margin: 1px 0 9px;
}
.big.three {
  width: 59px;
}
.big.four {
  width: 77px;
}
.big.hover {
  background: #d2d2d2;
}
.big:disabled {
  color: #a6a6a6;
}
.big:disabled .caret {
  background: #ccc;
}
.pointer {
  position: absolute;
  left: 23px;
  top: 64px;
}
.themes {
  width: 152px;
}
.themes .body {
  padding-left: 4px;
}
.small-col {
  padding-left: 3px;
}
.small {
  height: 33px;
  display: flex;
  align-items: center;
  gap: 2px;
}
.small .caret {
  margin-left: 3px;
}
.setup {
  width: 493px;
}
.setup .body {
  padding-left: 3px;
}
.fit {
  width: 217px;
}
.rows {
  flex-direction: column;
  margin-top: -2px;
  height: 103px;
}
.row {
  height: 31px;
  display: flex;
  align-items: center;
  padding: 0 3px 0 8px;
  gap: 4px;
}
.dropdown {
  position: relative;
  width: 106px;
  height: 30px;
  margin-left: auto;
  border: 1px solid #d0d0d0;
}
.dropdown select,
.dropdown input {
  width: 100%;
  height: 28px;
  padding-left: 2px;
  appearance: none;
}
.dropdown .caret {
  position: absolute;
  right: 4px;
  top: 12px;
  pointer-events: none;
}
.dropdown.spin {
  width: 98px;
}
.spin .caret {
  right: 8px;
  top: 18px;
}
.spin .caret.up {
  top: 6px;
}
.options {
  width: 163px;
}
.options .body {
  padding-left: 4px;
}
fieldset {
  width: 82px;
  min-width: 0;
  margin: 0;
  padding: 0;
  border: 0;
}
legend {
  height: 33px;
  padding: 0;
  line-height: 36px;
}
fieldset label {
  height: 31px;
  display: flex;
  align-items: center;
  gap: 7px;
  padding-left: 3px;
}
input[type="checkbox"] {
  appearance: none;
  width: 19px;
  height: 19px;
  border: 1px solid #aaa;
  display: grid;
  place-items: center;
}
input[type="checkbox"]:checked::before {
  content: "";
  width: 6px;
  height: 11px;
  margin-top: -3px;
  border: solid #666;
  border-width: 0 2px 2px 0;
  transform: rotate(40deg);
}
.arrange {
  width: 414px;
}
.arrange .body {
  padding-left: 3px;
}
.collapse {
  margin: 108px 12px 0 auto;
}

/* formula bar */
.formula-bar {
  flex: none;
  display: flex;
  align-items: center;
  padding: 15px 7px;
  background: #f9f9f9;
}
.name-box,
.fx,
.formula {
  height: 37px;
  display: flex;
  align-items: center;
  padding-bottom: 2px;
  border: 1px solid #d4d4d4;
  background: #fff;
}
.name-box {
  width: 185px;
  padding-left: 7px;
  padding-right: 9px;
}
.name-box input {
  flex: 1;
  min-width: 0;
}
.formula-bar .dots {
  margin: 0 22px 0 20px;
}
.fx {
  width: 164px;
  margin-right: 4px;
}
.fx button {
  flex: 1;
  display: flex;
  justify-content: center;
}
.fx-label {
  font: italic 24px/28px "Liberation Serif", serif;
  color: #666;
}
.fx-label .x {
  font-size: 18px;
}
.formula {
  flex: 1;
  padding-left: 15px;
  padding-right: 7px;
}
.formula input {
  flex: 1;
  font-size: 22px;
  font-weight: 300;
}

/* grid */
.workspace {
  flex: 1;
  min-height: 0;
  display: flex;
  background: #f9f9f9;
}
.sheet {
  flex: 1;
  min-width: 0;
  overflow: hidden;
}
table {
  width: 100%;
  table-layout: fixed;
  border-collapse: separate;
  border-spacing: 0;
  background: #fff;
}
col {
  width: 104px;
}
col.rh {
  width: 46px;
}
col.wide {
  width: 238px;
}
col.rest {
  width: auto;
}
th,
td {
  height: 28px;
  padding: 0;
  border: solid #e1e1e1;
  border-width: 0 1px 1px 0;
  line-height: 27px;
  white-space: nowrap;
}
th {
  font-size: 20px;
  font-weight: 400;
  color: #000;
  background: #f9f9f9;
}
thead th {
  border-color: #9c9c9c #c4c4c4;
  line-height: 26px;
}
thead th:last-child {
  border-right-color: #f9f9f9;
}
tbody th {
  border-right-color: #9c9c9c;
}
.corner svg {
  margin-left: 22px;
}
th.current {
  color: #1e5c3c;
  background: #e0e0e0;
}
thead th.current {
  border-bottom: 2px solid #217346;
}
tbody th.current {
  border-right: 2px solid #217346;
}
td:last-child {
  border-right-color: #9c9c9c;
}
td {
  position: relative;
  font-size: 22px;
  font-weight: 300;
}
.num {
  font-size: 21px;
}
.red,
.green,
.blue,
.yellow {
  padding-left: 3px;
  border-color: #000;
}
.red {
  color: #a80000;
}
.green {
  color: #0f9f58;
}
.blue {
  color: #0b62a0;
}
.yellow {
  color: #f0c11a;
}
.text::before {
  content: "";
  position: absolute;
  left: 0;
  top: 0;
  width: 7px;
  height: 7px;
  background: #0b7a17;
  clip-path: polygon(0 0, 100% 0, 0 100%);
}
.selected::before {
  content: "";
  position: absolute;
  z-index: 1;
  inset: -2px;
  border: 2px solid #217346;
}
.selected::after {
  content: "";
  position: absolute;
  z-index: 2;
  right: -4px;
  bottom: -4px;
  width: 8px;
  height: 8px;
  border: solid #fff;
  border-width: 1px 0 0 1px;
  background: #217346;
}
.vscroll {
  width: 30px;
  display: flex;
  flex-direction: column;
  padding: 1px 3px 0 2px;
}
.vscroll button {
  height: 25px;
  display: flex;
  align-items: center;
  justify-content: center;
  border: 1px solid #d0d0d0;
  background: #fff;
}
.vscroll .caret {
  width: 12px;
  height: 7px;
}
.vscroll .thumb {
  flex: 591;
  border: 1px solid #b5b5b5;
  background: #fff;
}
.vscroll .track {
  flex: 28;
  background: #ececec;
}

/* sheet tabs */
.sheet-bar {
  height: 34px;
  flex: none;
  display: flex;
  align-items: flex-start;
  border-bottom: 1px solid #cfcfcf;
  background: linear-gradient(#9c9c9c 0 1px, #f9f9f9 1px);
}
.sheet-nav {
  width: 115px;
  height: 34px;
  display: flex;
  align-items: center;
  gap: 26px;
  padding-left: 30px;
}
.sheet-tab {
  font-size: 19px;
}
.sheet-tab.active {
  width: 94px;
  height: 29px;
  padding-bottom: 2px;
  border: solid #9c9c9c;
  border-width: 0 1px;
  border-bottom: 2px solid #217346;
  background: #fff;
  color: #217346;
}
.sheet-tab:not(.active) {
  width: 92px;
  height: 25px;
  margin-top: 4px;
  line-height: 16px;
  padding-bottom: 8px;
  border-right: 1px solid #9c9c9c;
}
.add-sheet {
  margin: 6px 0 0 38px;
}
.sheet-bar .dots {
  margin: 9px 18px 0 auto;
}
.hscroll {
  width: 724px;
  height: 25px;
  display: flex;
  margin: 4px 29px 0 0;
}
.hscroll button {
  width: 25px;
  display: flex;
  align-items: center;
  justify-content: center;
  border: 1px solid #d0d0d0;
  background: #fff;
}
.hscroll .thumb {
  flex: 629;
  border: 1px solid #b5b5b5;
  background: #fff;
}
.hscroll .track {
  flex: 45;
  background: #ececec;
}

/* status bar */
.status {
  height: 32px;
  flex: none;
  display: flex;
  align-items: center;
  padding: 0 10px 0 7px;
}
.status span {
  padding-bottom: 2px;
}
.views {
  align-self: stretch;
  display: flex;
  margin-left: auto;
}
.views button {
  width: 45px;
  display: flex;
  align-items: center;
  justify-content: center;
}
.views .on {
  background: #d9d9d9;
}
.zoom {
  display: flex;
  align-items: center;
  padding-left: 4px;
}
.zoom input {
  appearance: none;
  width: 150px;
  height: 16px;
  margin: 0 4px;
  background: linear-gradient(#b0b0b0, #b0b0b0) center / 100% 1px no-repeat;
}
.zoom input::-webkit-slider-thumb {
  appearance: none;
  width: 6px;
  height: 16px;
  background: #666;
}
.zoom span {
  width: 48px;
  margin-left: 17px;
}

/* taskbar */
.taskbar {
  height: 60px;
  flex: none;
  display: flex;
  align-items: center;
  background: linear-gradient(90deg, #1b2c35 0, #1b2b30 50%, #14252d 68%, #1e2220 76%, #12232b 84%, #0e222b 100%);
  color: #fff;
}
.sys,
.app {
  height: 60px;
  display: flex;
  align-items: center;
  justify-content: center;
}
.sys {
  width: 72px;
}
.app {
  width: 75px;
}
.open {
  background: linear-gradient(#7fbff2, #7fbff2) bottom / 61px 3px no-repeat;
}
.app.current {
  width: 73px;
  margin-left: 2px;
  background:
    linear-gradient(#7fbff2, #7fbff2) bottom / 100% 3px no-repeat,
    linear-gradient(90deg, #4b5a60 66px, #3a484e 66px);
}
.sep {
  width: 4px;
  height: 36px;
  margin: 0 16px 0 10px;
  border: solid #55646b;
  border-width: 0 1px;
}
.logo-letter {
  font: bold 16px "Open Sans", sans-serif;
  fill: #fff;
}
.logo-small {
  font: 8px "Open Sans", sans-serif;
  fill: #fff;
}
.tray {
  height: 60px;
  display: flex;
  align-items: center;
  margin-left: auto;
  padding-right: 12px;
  margin-right: 6px;
  border-right: 1px solid #6d7b82;
}
.tray .sep {
  margin: 0 12px 0 0;
}
.ime {
  width: 200px;
  display: flex;
  flex-wrap: wrap;
}
.ime span {
  width: 28px;
  height: 30px;
  display: flex;
  align-items: center;
  justify-content: center;
  font-size: 22px;
  font-weight: 500;
}
.ime .first {
  width: 32px;
}
.t {
  width: 36px;
  display: flex;
  align-items: center;
  justify-content: center;
}
.t.kb {
  width: 46px;
}
.t.zh {
  font-size: 22px;
  font-weight: 500;
}
.t.sg {
  width: 52px;
}
.t.note {
  width: 62px;
}
```
FILE: grid.js
```js
// pad the sheet with blank rows below the data
const body = document.getElementById("rows");
for (let n = body.rows.length + 1; n <= 23; n++) {
  const row = body.insertRow();
  const head = document.createElement("th");
  head.textContent = n;
  row.appendChild(head);
  for (let c = 0; c < 16; c++) row.insertCell();
}
```
